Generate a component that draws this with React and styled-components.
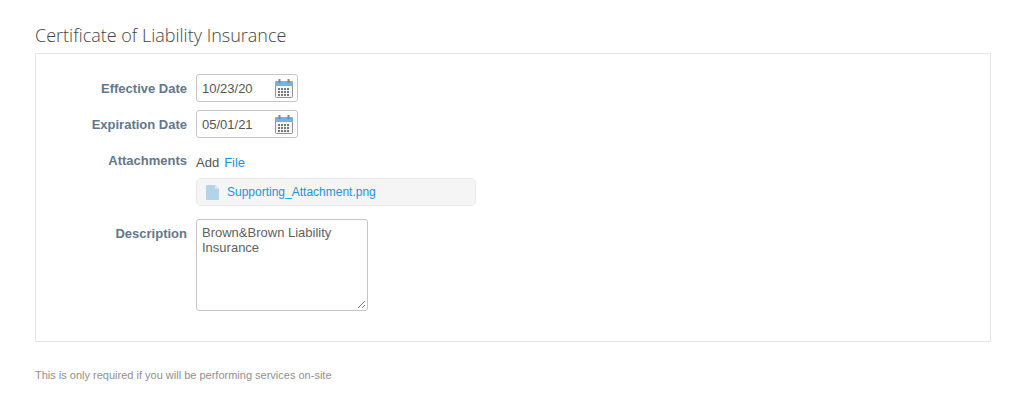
import React from 'react';
import styled, { createGlobalStyle } from 'styled-components';

const GlobalStyle = createGlobalStyle`
	html, body {
		margin: 0;
		padding: 0;
		background: #fff;
	}
	body {
		font-family: 'Liberation Sans', Arial, sans-serif;
		color: #555;
	}
`;

const Page = styled.div`
	padding: 24px 28px 0 35px;
`;

const Title = styled.h2`
	margin: 0 0 7px;
	font-family: 'Open Sans', sans-serif;
	font-weight: 300;
	font-size: 18px;
	line-height: 22px;
	color: #444;
`;

const Panel = styled.div`
	border: 1px solid #e6e6e6;
	padding: 20px 0 30px;
	display: flex;
	flex-direction: column;
	width: 954px;
`;

const Row = styled.div`
	display: grid;
	grid-template-columns: 151px 1fr;
	column-gap: 9px;
	margin-bottom: ${(p) => p.$gap || 0}px;
`;

const Label = styled.div`
	text-align: right;
	font-size: 13px;
	font-weight: 700;
	line-height: 15px;
	color: #62778c;
	padding-top: ${(p) => p.$top || 0}px;
`;

const DateBox = styled.div`
	width: 91px;
	height: 26px;
	border: 1px solid #c6c6c6;
	border-radius: 3px;
	display: flex;
	align-items: center;
	justify-content: space-between;
	padding: 0 4px 0 5px;
	font-size: 13px;
	color: #555;
`;

const Field = styled.div`
	display: flex;
	flex-direction: column;
`;

const AddLine = styled.div`
	font-size: 13px;
	line-height: 15px;
	display: flex;
	gap: 5px;
	padding-top: 2px;
`;

const FileLink = styled.span`
	color: #1a94dc;
`;

const FileChip = styled.div`
	margin-top: 8px;
	width: 269px;
	height: 26px;
	background: #f5f5f5;
	border: 1px solid #e9e9e9;
	border-radius: 5px;
	display: flex;
	align-items: center;
	padding-left: 9px;
	gap: 8px;
	font-size: 12px;
	color: #1a94dc;
`;

const TextBox = styled.div`
	position: relative;
	width: 160px;
	height: 79px;
	border: 1px solid #c6c6c6;
	border-radius: 3px;
	padding: 5px 5px 6px 5px;
	font-size: 13px;
	line-height: 15px;
	color: #5f5f5f;
`;

const Grip = styled.svg`
	position: absolute;
	right: 1px;
	bottom: 1px;
`;

const Note = styled.p`
	margin: 27px 0 0;
	font-size: 11px;
	line-height: 13px;
	color: #8f8f8f;
`;

const CalendarIcon = () => (
	<svg width="18" height="19" viewBox="0 0 18 19">
		<rect x="0.5" y="2.5" width="17" height="16" rx="1" fill="#f6f6f6" stroke="#929292" />
		<rect x="0" y="2" width="18" height="5" rx="1" fill="#6db3ee" />
		<rect x="3.5" y="0" width="2" height="4" fill="#858585" />
		<rect x="12.5" y="0" width="2" height="4" fill="#858585" />
		{[9, 12, 15].map((y) =>
			[3, 6, 9, 12].map((x) => (
				<rect key={`${x}-${y}`} x={x} y={y} width="2" height="2" fill="#777" />
			))
		)}
	</svg>
);

const DocIcon = () => (
	<svg width="13" height="15" viewBox="0 0 13 15">
		<path d="M0 1a1 1 0 0 1 1-1h8l4 4v10a1 1 0 0 1-1 1H1a1 1 0 0 1-1-1z" fill="#b3d3e8" />
		<path d="M9 0l4 4H9z" fill="#d5e6f2" />
	</svg>
);

const DateField = ({ value }) => (
	<DateBox>
		<span>{value}</span>
		<CalendarIcon />
	</DateBox>
);

const App = () => (
	<>
		<GlobalStyle />
		<Page>
			<Title>Certificate of Liability Insurance</Title>
			<Panel>
				<Row $gap={8}>
					<Label $top={7}>Effective Date</Label>
					<DateField value="10/23/20" />
				</Row>
				<Row $gap={15}>
					<Label $top={7}>Expiration Date</Label>
					<DateField value="05/01/21" />
				</Row>
				<Row $gap={13}>
					<Label>Attachments</Label>
					<Field>
						<AddLine>
							<span>Add</span>
							<FileLink>File</FileLink>
						</AddLine>
						<FileChip>
							<DocIcon />
							<span>Supporting_Attachment.png</span>
						</FileChip>
					</Field>
				</Row>
				<Row>
					<Label $top={7}>Description</Label>
					<TextBox>
						Brown&amp;Brown Liability
						<br />
						Insurance
						<Grip width="9" height="9" viewBox="0 0 9 9">
							<path d="M1 8L8 1M5 8L8 5" stroke="#777" strokeWidth="1" fill="none" />
						</Grip>
					</TextBox>
				</Row>
			</Panel>
			<Note>This is only required if you will be performing services on-site</Note>
		</Page>
	</>
);

export default App;
